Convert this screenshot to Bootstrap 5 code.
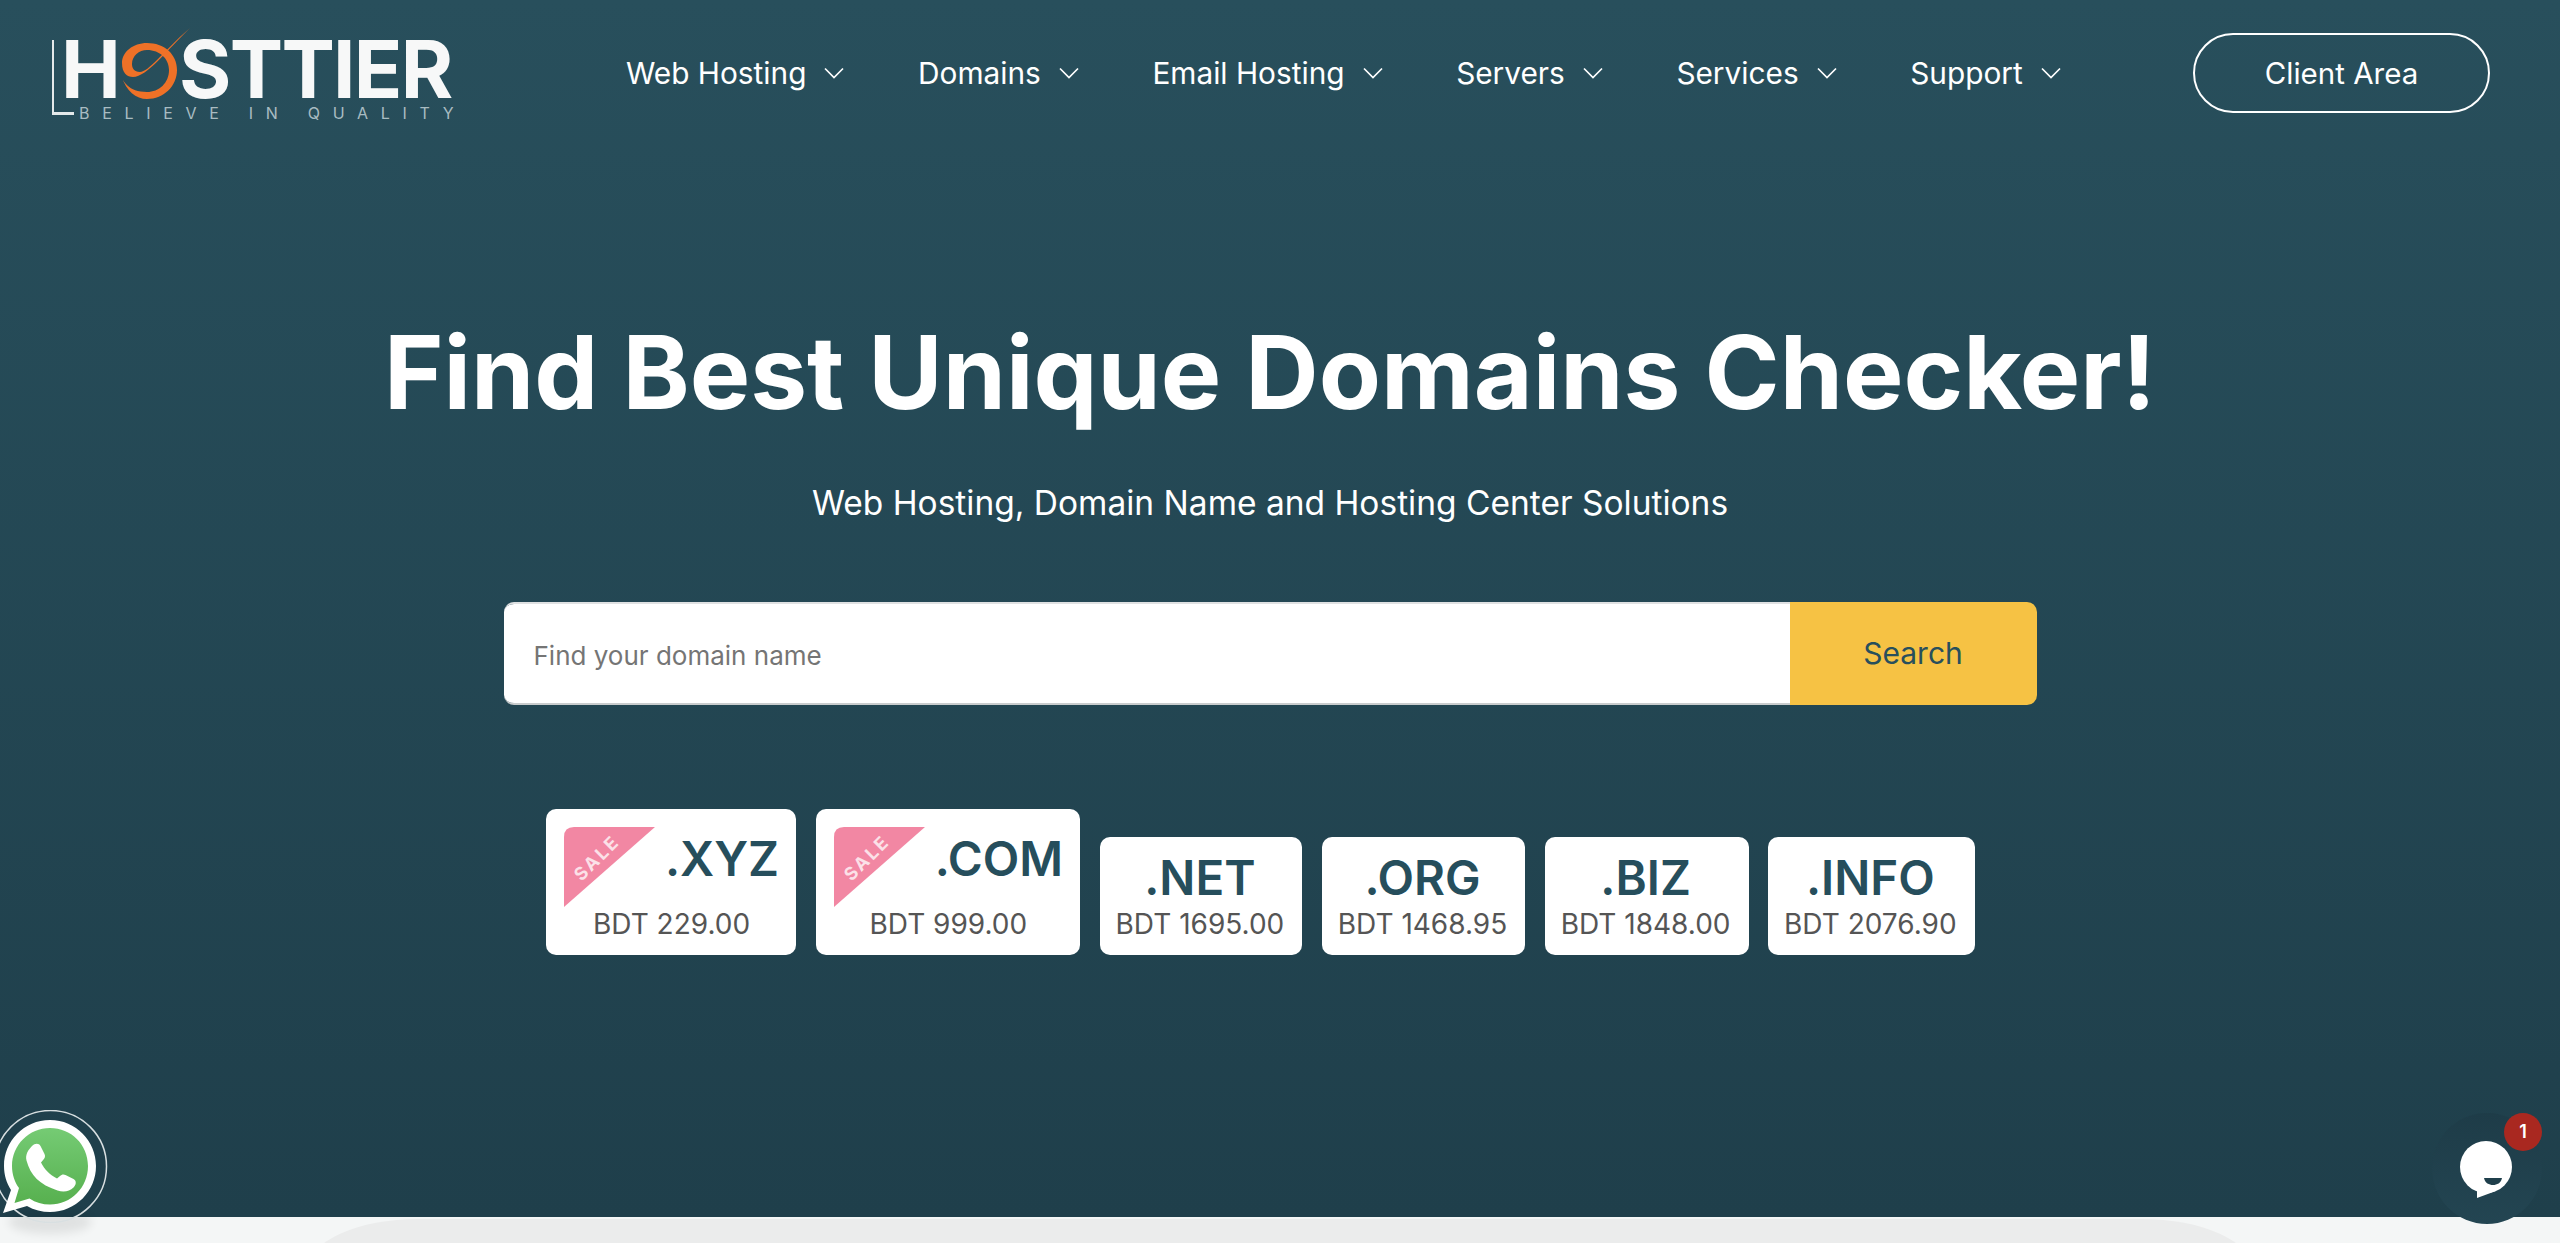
<!DOCTYPE html>
<html lang="en">
<head>
    <meta charset="UTF-8">
    <meta name="viewport" content="width=device-width, initial-scale=1.0">
    <title>Hosttier - Domains</title>
    <link rel="stylesheet" href="https://cdn.jsdelivr.net/npm/bootstrap@5.3.0/dist/css/bootstrap.min.css">
    <style>
        body {
            height: 100vh;
            overflow: hidden;
            font-family: Inter, "Liberation Sans", sans-serif;
            background: #f4f6f6;
        }
        .hero-area {
            flex: 1 1 auto;
            background: linear-gradient(180deg, #284f5c 0%, #1f3f4b 100%);
        }
        .top-bar {
            height: 146px;
            padding: 0 70px 0 50px;
        }
        .brand-box {
            position: relative;
            width: 405px;
            height: 80px;
            margin: 14px 171px 0 0;
            color: #f7f8f8;
        }
        .brand-corner {
            position: absolute;
            left: 2px;
            top: 0;
            width: 22px;
            height: 75px;
            border-left: 2px solid #e4e9ea;
            border-bottom: 3px solid #e4e9ea;
        }
        .brand-word {
            position: absolute;
            left: 11px;
            top: 0;
            height: 58px;
            font-size: 80px;
            font-weight: 700;
            line-height: 58px;
            letter-spacing: -1.7px;
        }
        .brand-ring {
            position: absolute;
            left: 67px;
            top: -14px;
        }
        .brand-tag {
            position: absolute;
            left: 29px;
            top: 66px;
            font-size: 16px;
            line-height: 14px;
            letter-spacing: 12.7px;
            white-space: nowrap;
            color: #a9bcc2;
        }
        .menu-list { gap: 73.6px; }
        .menu-list .nav-link {
            padding: 0;
            font-size: 29.8px;
            line-height: 36px;
            color: #fff;
        }
        .menu-list svg { margin-left: 18px; }
        .client-btn {
            width: 297px;
            height: 80px;
            margin-left: auto;
            border: 2px solid #fff;
            border-radius: 40px;
            font-size: 29.5px;
            color: #fff;
        }
        .client-btn:hover { color: #fff; }
        .hero-body { padding: 164px 20px 0 0; }
        .hero-title {
            margin: 0 0 49px;
            font-size: 101.6px;
            font-weight: 700;
            line-height: 125px;
            color: #fff;
        }
        .hero-sub {
            margin: 0 0 80px;
            font-size: 33.5px;
            line-height: 38px;
            color: #fff;
        }
        .search-box {
            width: 1533px;
            height: 103px;
            margin-bottom: 104px;
        }
        .search-box .form-control {
            padding: 4px 30px 0;
            border: 0;
            border-bottom: 2px solid #c9cccd;
            border-top: 2px solid #dfe1e2;
            border-radius: 10px 0 0 10px;
            font-size: 26px;
        }
        .search-box .form-control::placeholder { color: #757575; }
        .search-btn {
            width: 247px;
            border: 0;
            border-radius: 0 10px 10px 0;
            background: #f6c244;
            font-size: 30px;
            color: #284f5c;
        }
        .search-btn:hover { background: #f6c244; color: #284f5c; }
        .tld-box {
            margin-right: 19.5px;
            padding: 18px 18px 14px 16px;
            border-radius: 10px;
            background: #fff;
            text-align: center;
        }
        .tld-sale { padding: 18px 17px 14px 18px; }
        .tld-name {
            margin-bottom: 6px;
            font-size: 47.5px;
            font-weight: 600;
            line-height: 46px;
            white-space: nowrap;
            color: #264e5c;
        }
        .tld-price {
            font-size: 28px;
            line-height: 34px;
            white-space: nowrap;
            color: #555;
        }
        .sale-head { height: 80px; gap: 10px; }
        .sale-head .tld-name { margin: 9px 0 0; }
        .sale-flag {
            position: relative;
            flex: 0 0 91px;
            height: 80px;
        }
        .sale-flag span {
            position: absolute;
            left: 5px;
            top: 21px;
            transform: rotate(-45deg);
            font-size: 18px;
            font-weight: 700;
            line-height: 20px;
            letter-spacing: 2.5px;
            color: rgba(255, 255, 255, .75);
        }
        .bottom-strip {
            flex: 0 0 26px;
            overflow: hidden;
            background: #f4f6f6;
        }
        .bottom-curve {
            height: 60px;
            margin: 2px 308px 0;
            border-radius: 110px 110px 0 0 / 50px 50px 0 0;
            background: #ebecec;
        }
        .wa-float {
            position: fixed;
            left: -6px;
            top: 1110px;
        }
        .chat-float {
            position: fixed;
            left: 2432px;
            top: 1113px;
            width: 110px;
            height: 111px;
            border-radius: 50%;
            background: linear-gradient(180deg, #1e3c48 0%, #234552 100%);
        }
        .chat-count {
            position: absolute;
            right: 0;
            top: 0;
            width: 38px;
            height: 38px;
            border-radius: 50%;
            background: #a92820;
            font-size: 18px;
            font-weight: 600;
            line-height: 38px;
            text-align: center;
            color: #fff;
        }
    </style>
</head>
<body class="d-flex flex-column">

    <div class="hero-area d-flex flex-column">
        <!-- Header -->
        <nav class="top-bar d-flex align-items-center">
            <a class="brand-box d-block text-decoration-none" href="#">
                <span class="brand-corner"></span>
                <span class="brand-word">H<span class="opacity-0">O</span>STTIER</span>
                <svg class="brand-ring" width="76" height="76" viewBox="0 0 76 76" fill="none">
                    <path d="M5 51C9 65 19 73 30 73C47 73 60 60 60 44C60 28 47 17 30 17C16 17 5 26 5 37C5 47 10 51 16 51C30 51 50 24 73 2C58 15 50 24 40 34C33 41 27 46 23 46C17 46 15 42 15 38C15 30 22 24 30 24C43 24 52 33 52 44C52 57 42 66 30 66C21 66 14 63 11 60C8 57 6 55 5 51Z" fill="#ee7127"/>
                </svg>
                <span class="brand-tag">BELIEVE IN QUALITY</span>
            </a>

            <ul class="menu-list nav flex-nowrap">
                <li class="nav-item"><a class="nav-link d-flex align-items-center" href="#">Web Hosting<svg width="20" height="12" viewBox="0 0 20 12" fill="none"><path d="M1 1.5l9 9 9-9" stroke="#fff" stroke-width="1.7"/></svg></a></li>
                <li class="nav-item"><a class="nav-link d-flex align-items-center" href="#">Domains<svg width="20" height="12" viewBox="0 0 20 12" fill="none"><path d="M1 1.5l9 9 9-9" stroke="#fff" stroke-width="1.7"/></svg></a></li>
                <li class="nav-item"><a class="nav-link d-flex align-items-center" href="#">Email Hosting<svg width="20" height="12" viewBox="0 0 20 12" fill="none"><path d="M1 1.5l9 9 9-9" stroke="#fff" stroke-width="1.7"/></svg></a></li>
                <li class="nav-item"><a class="nav-link d-flex align-items-center" href="#">Servers<svg width="20" height="12" viewBox="0 0 20 12" fill="none"><path d="M1 1.5l9 9 9-9" stroke="#fff" stroke-width="1.7"/></svg></a></li>
                <li class="nav-item"><a class="nav-link d-flex align-items-center" href="#">Services<svg width="20" height="12" viewBox="0 0 20 12" fill="none"><path d="M1 1.5l9 9 9-9" stroke="#fff" stroke-width="1.7"/></svg></a></li>
                <li class="nav-item"><a class="nav-link d-flex align-items-center" href="#">Support<svg width="20" height="12" viewBox="0 0 20 12" fill="none"><path d="M1 1.5l9 9 9-9" stroke="#fff" stroke-width="1.7"/></svg></a></li>
            </ul>

            <a class="client-btn btn d-flex align-items-center justify-content-center" href="#">Client Area</a>
        </nav>

        <!-- Domain search -->
        <div class="hero-body d-flex flex-column align-items-center text-center">
            <h1 class="hero-title">Find Best Unique Domains Checker!</h1>
            <p class="hero-sub">Web Hosting, Domain Name and Hosting Center Solutions</p>

            <form class="search-box input-group flex-nowrap">
                <input type="text" class="form-control" placeholder="Find your domain name">
                <button type="button" class="search-btn btn">Search</button>
            </form>

            <div class="d-flex align-items-end justify-content-center align-self-stretch">
                <div class="tld-box tld-sale">
                    <div class="sale-head d-flex">
                        <div class="sale-flag">
                            <svg width="91" height="80" viewBox="0 0 91 80"><path d="M0 80V10Q0 0 10 0H91Z" fill="#f287a3"/></svg>
                            <span>SALE</span>
                        </div>
                        <div class="tld-name">.XYZ</div>
                    </div>
                    <div class="tld-price">BDT 229.00</div>
                </div>
                <div class="tld-box tld-sale">
                    <div class="sale-head d-flex">
                        <div class="sale-flag">
                            <svg width="91" height="80" viewBox="0 0 91 80"><path d="M0 80V10Q0 0 10 0H91Z" fill="#f287a3"/></svg>
                            <span>SALE</span>
                        </div>
                        <div class="tld-name">.COM</div>
                    </div>
                    <div class="tld-price">BDT 999.00</div>
                </div>
                <div class="tld-box">
                    <div class="tld-name">.NET</div>
                    <div class="tld-price">BDT 1695.00</div>
                </div>
                <div class="tld-box">
                    <div class="tld-name">.ORG</div>
                    <div class="tld-price">BDT 1468.95</div>
                </div>
                <div class="tld-box">
                    <div class="tld-name">.BIZ</div>
                    <div class="tld-price">BDT 1848.00</div>
                </div>
                <div class="tld-box">
                    <div class="tld-name">.INFO</div>
                    <div class="tld-price">BDT 2076.90</div>
                </div>
            </div>
        </div>
    </div>

    <div class="bottom-strip">
        <div class="bottom-curve"></div>
    </div>

    <!-- WhatsApp -->
    <div class="wa-float">
        <svg width="116" height="134" viewBox="0 0 116 134" fill="none">
            <defs>
                <linearGradient id="waGreen" x1="0" y1="0" x2="0" y2="1">
                    <stop offset="0" stop-color="#75cb74"/>
                    <stop offset="1" stop-color="#57b04f"/>
                </linearGradient>
                <filter id="waBlur" x="-20%" y="-50%" width="140%" height="200%">
                    <feGaussianBlur stdDeviation="5"/>
                </filter>
            </defs>
            <ellipse cx="56" cy="112" rx="42" ry="12" fill="#000" opacity=".08" filter="url(#waBlur)"/>
            <circle cx="56.500" cy="56.500" r="56" stroke="#d8dfe1" stroke-width="1.500"/>
            <path d="M56 10C30 10 10 31 10 56c0 9 2.500 17 7 24L9 103l24-7c7 4 15 6 23 6 26 0 46-21 46-46S82 10 56 10Z" fill="#fff"/>
            <path d="M56 18C35 18 18 35 18 56c0 8 2.500 16 7 22l-4.500 15 15-4.500c6 4 13 6 20.500 6 21 0 38-17 38-38.500S77 18 56 18Z" fill="url(#waGreen)"/>
            <path d="M38 36c3-3 7-3 8.500 0l4 8c1 2 .5 4-1 5.500l-2.500 3c3.500 7 9 12.500 16 16l3-2.500c1.500-1.500 3.500-2 5.500-1l8 4c3 1.500 3 5.500 0 8.500-4 4-10 5-16 3-18-6-27-15-31-30-1.500-6 2-11 5.500-14.500Z" fill="#fff"/>
        </svg>
    </div>

    <!-- Chat -->
    <div class="chat-float">
        <svg width="110" height="111" viewBox="0 0 110 111">
            <circle cx="54" cy="54" r="26" fill="#fff"/>
            <path d="M45 85V72L64 78Z" fill="#fff"/>
            <path d="M52 65h18c-1 5-5 7-9 7s-8-2-9-7Z" fill="#1f3f4b"/>
        </svg>
        <div class="chat-count">1</div>
    </div>

    <script src="https://cdn.jsdelivr.net/npm/bootstrap@5.3.0/dist/js/bootstrap.bundle.min.js"></script>
</body>
</html>
